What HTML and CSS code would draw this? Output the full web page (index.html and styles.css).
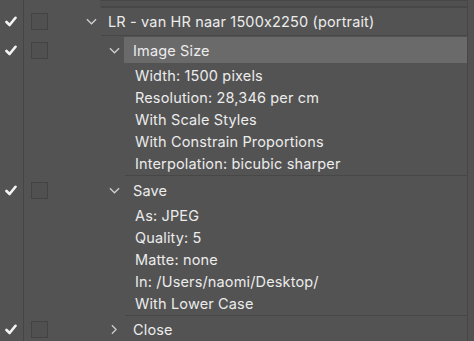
FILE: index.html
```html
<!DOCTYPE html>
<html>
<head>
<meta charset="utf-8">
<link rel="stylesheet" href="styles.css">
</head>
<body>
<div class="panel">
  <div class="list">
    <div class="row cut">
      <div class="check"></div><div class="boxcol"></div>
      <div class="tree"><span class="chev"></span><div class="label lvl0"></div></div>
    </div>

    <div class="row action">
      <div class="check"><svg class="tick" viewBox="0 0 12 11"><path d="M1.5 6 L4.6 9 L10.5 1.8"/></svg></div>
      <div class="boxcol"><span class="box"></span></div>
      <div class="tree">
        <span class="chev"><svg viewBox="0 0 12 7"><path d="M1 1 L6 6 L11 1"/></svg></span>
        <div class="label lvl0">LR - van HR naar 1500x2250 (portrait)</div>
      </div>
    </div>

    <div class="row cmd">
      <div class="check"><svg class="tick" viewBox="0 0 12 11"><path d="M1.5 6 L4.6 9 L10.5 1.8"/></svg></div>
      <div class="boxcol"><span class="box"></span></div>
      <div class="tree">
        <span class="indent"></span>
        <span class="chev"><svg viewBox="0 0 12 7"><path d="M1 1 L6 6 L11 1"/></svg></span>
        <div class="label lvl1 selected">Image Size</div>
      </div>
    </div>
    <div class="row param"><div class="check"></div><div class="boxcol"></div><div class="tree"><div class="label lvl2">Width: 1500 pixels</div></div></div>
    <div class="row param"><div class="check"></div><div class="boxcol"></div><div class="tree"><div class="label lvl2">Resolution: 28,346 per cm</div></div></div>
    <div class="row param"><div class="check"></div><div class="boxcol"></div><div class="tree"><div class="label lvl2">With Scale Styles</div></div></div>
    <div class="row param"><div class="check"></div><div class="boxcol"></div><div class="tree"><div class="label lvl2">With Constrain Proportions</div></div></div>
    <div class="row param last"><div class="check"></div><div class="boxcol"></div><div class="tree"><div class="label lvl2">Interpolation: bicubic sharper</div></div></div>

    <div class="row cmd">
      <div class="check"><svg class="tick" viewBox="0 0 12 11"><path d="M1.5 6 L4.6 9 L10.5 1.8"/></svg></div>
      <div class="boxcol"><span class="box"></span></div>
      <div class="tree">
        <span class="indent"></span>
        <span class="chev"><svg viewBox="0 0 12 7"><path d="M1 1 L6 6 L11 1"/></svg></span>
        <div class="label lvl1">Save</div>
      </div>
    </div>
    <div class="row param"><div class="check"></div><div class="boxcol"></div><div class="tree"><div class="label lvl2">As: JPEG</div></div></div>
    <div class="row param"><div class="check"></div><div class="boxcol"></div><div class="tree"><div class="label lvl2">Quality: 5</div></div></div>
    <div class="row param"><div class="check"></div><div class="boxcol"></div><div class="tree"><div class="label lvl2">Matte: none</div></div></div>
    <div class="row param"><div class="check"></div><div class="boxcol"></div><div class="tree"><div class="label lvl2">In: /Users/naomi/Desktop/</div></div></div>
    <div class="row param last"><div class="check"></div><div class="boxcol"></div><div class="tree"><div class="label lvl2">With Lower Case</div></div></div>

    <div class="row cmd close">
      <div class="check"><svg class="tick" viewBox="0 0 12 11"><path d="M1.5 6 L4.6 9 L10.5 1.8"/></svg></div>
      <div class="boxcol"><span class="box"></span></div>
      <div class="tree">
        <span class="indent"></span>
        <span class="chev right"><svg viewBox="0 0 7 12"><path d="M1 1 L6 6 L1 11"/></svg></span>
        <div class="label lvl1">Close</div>
      </div>
    </div>
  </div>
  <div class="scroll"></div>
</div>
</body>
</html>
```

FILE: styles.css
```css
html, body {
  margin: 0;
  padding: 0;
  background: #535353;
}
body {
  font-family: Inter, "Liberation Sans", Arial, sans-serif;
  font-size: 14.5px;
  letter-spacing: 0.15px;
  color: #ececec;
}
.panel {
  display: flex;
  width: 474px;
  height: 341px;
  overflow: hidden;
  background: #535353;
}
.list {
  width: 467px;
  display: flex;
  flex-direction: column;
}
.scroll {
  flex: 1;
  border-left: 1px solid #474747;
  background: #525252;
}
.row {
  display: flex;
  flex: none;
}
.check {
  width: 23px;
  border-right: 1px solid #454545;
  display: flex;
  align-items: center;
  justify-content: center;
  flex: none;
}
.tick {
  width: 12px;
  height: 11px;
  margin-left: -1px;
}
.tick path {
  fill: none;
  stroke: #f4f4f4;
  stroke-width: 2.6;
  stroke-linecap: round;
  stroke-linejoin: round;
}
.boxcol {
  width: 56px;
  flex: none;
  display: flex;
  align-items: center;
}
.box {
  display: block;
  width: 15px;
  height: 15px;
  margin-left: 7px;
  border: 1px solid #434343;
  background: #505050;
}
.tree {
  flex: 1;
  display: flex;
  align-items: stretch;
}
.indent {
  width: 24px;
  flex: none;
}
.chev {
  width: 20px;
  flex: none;
  display: flex;
  align-items: center;
  justify-content: center;
}
.chev svg {
  width: 11px;
  height: 7px;
}
.chev.right svg {
  width: 6px;
  height: 11px;
}
.chev path {
  fill: none;
  stroke: #d0d0d0;
  stroke-width: 1.4;
}
.label {
  flex: 1;
  display: flex;
  align-items: center;
  white-space: nowrap;
}
.cut {
  height: 7px;
}
.cut .label {
  background: #505050;
}
.action {
  height: 29px;
}
.action .chev {
  padding-left: 1px;
}
.lvl0 {
  padding-left: 7px;
  border-top: 1px solid #474747;
  border-bottom: 1px solid #474747;
}
.cmd {
  height: 28px;
}
.close {
  height: 26px;
}
.lvl1 {
  padding-left: 9px;
  margin: 1px 0;
}
.selected {
  background: #6a6a6a;
}
.param {
  height: 22px;
}
.param.last {
  height: 24px;
}
.lvl2 {
  margin-left: 45px;
  padding-left: 10px;
}
.last .lvl2 {
  border-bottom: 1px solid #474747;
  padding-bottom: 1px;
}
```
